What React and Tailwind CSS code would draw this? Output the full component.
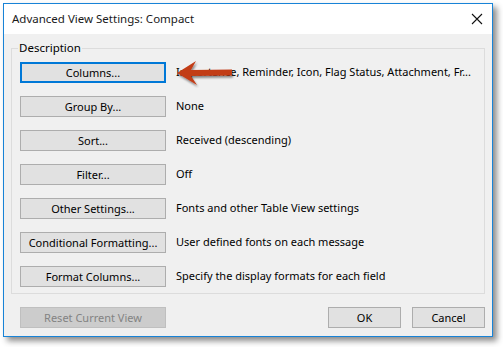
import React from 'react'

const rows = [
  { label: 'Columns...', value: 'Importance, Reminder, Icon, Flag Status, Attachment, Fr...', focused: true },
  { label: 'Group By...', value: 'None' },
  { label: 'Sort...', value: 'Received (descending)' },
  { label: 'Filter...', value: 'Off' },
  { label: 'Other Settings...', value: 'Fonts and other Table View settings' },
  { label: 'Conditional Formatting...', value: 'User defined fonts on each message' },
  { label: 'Format Columns...', value: 'Specify the display formats for each field' },
]

const DialogButton = ({ children, focused, disabled, className = '' }) => {
  const look = disabled
    ? 'bg-[#cccccc] border-[#bfbfbf] text-[#838383]'
    : focused
      ? 'bg-[#e1e1e1] border-2 border-[#0078d7] text-black'
      : 'bg-[#e1e1e1] border-[#adadad] text-black'
  return (
    <button
      type="button"
      className={`h-[21px] flex items-center justify-center border leading-none ${look} ${className}`}
    >
      {children}
    </button>
  )
}

const Arrow = () => (
  <svg
    className="absolute left-[174px] top-[58px]"
    width="64"
    height="30"
    viewBox="0 0 64 30"
  >
    <defs>
      <filter id="sh" x="-20%" y="-30%" width="140%" height="160%">
        <feDropShadow dx="1" dy="2" stdDeviation="1.2" floodColor="#000" floodOpacity="0.45" />
      </filter>
    </defs>
    <path
      d="M3 15 L22 3 L17 12 L58 11.5 L58 17.5 L17 18 L23 27 Z"
      fill="#c23d18"
      filter="url(#sh)"
    />
  </svg>
)

export default function App() {
  return (
    <div
      className="w-[503px] h-[347px] bg-white pl-[3px] pt-[3px] relative text-[11px] text-black"
      style={{ fontFamily: '"Noto Sans", "Open Sans", sans-serif' }}
    >
      <div className="w-[490px] h-[334px] border border-[#1883d7] bg-[#f0f0f0] shadow-[4px_4px_6px_rgba(0,0,0,0.45)] flex flex-col">
        {/* title bar */}
        <div className="h-[30px] bg-white flex items-center justify-between pl-[8px] pr-[8px]">
          <span className="text-[11.5px] text-[#1a1a1a]">Advanced View Settings: Compact</span>
          <svg width="12" height="12" viewBox="0 0 12 12" className="mr-[1px]">
            <path d="M1 1 L11 11 M11 1 L1 11" stroke="#111" strokeWidth="1.1" />
          </svg>
        </div>

        <div className="px-[7px] pt-[6px]">
          <fieldset className="border border-[#dcdcdc] px-[8px] pb-[6px] pt-[6px] flex flex-col gap-[13px]">
            <legend className="-ml-[2px] px-[1px] leading-[16px] text-[11.5px]">Description</legend>
            {rows.map((row) => (
              <div key={row.label} className="flex items-center gap-[10px]">
                <DialogButton focused={row.focused} className="w-[146px] shrink-0">
                  {row.label}
                </DialogButton>
                <span className="whitespace-nowrap">{row.value}</span>
              </div>
            ))}
          </fieldset>

          <div className="flex items-center mt-[13px] pl-[9px]">
            <DialogButton disabled className="w-[146px]">Reset Current View</DialogButton>
            <div className="ml-auto flex gap-[11px]">
              <DialogButton className="w-[73px]">OK</DialogButton>
              <DialogButton className="w-[73px]">Cancel</DialogButton>
            </div>
          </div>
        </div>
      </div>
      <Arrow />
    </div>
  )
}
